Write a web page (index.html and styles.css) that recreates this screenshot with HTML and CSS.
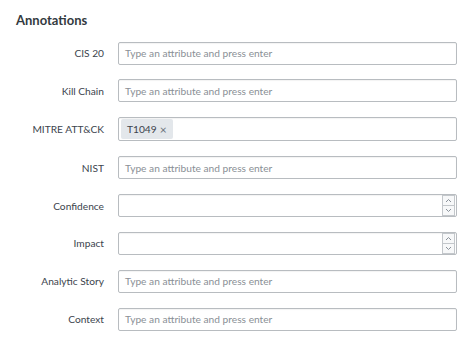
FILE: index.html
```html
<!DOCTYPE html>
<html>
<head>
<meta charset="utf-8">
<link rel="stylesheet" href="styles.css">
</head>
<body>
<div class="panel">
  <h2 class="title">Annotations</h2>
  <div class="form">
    <label class="label">CIS 20</label>
    <div class="field"><span class="ph">Type an attribute and press enter</span></div>

    <label class="label">Kill Chain</label>
    <div class="field"><span class="ph">Type an attribute and press enter</span></div>

    <label class="label">MITRE ATT&amp;CK</label>
    <div class="field chips"><span class="chip">T1049 <span class="x">×</span></span></div>

    <label class="label">NIST</label>
    <div class="field"><span class="ph">Type an attribute and press enter</span></div>

    <label class="label">Confidence</label>
    <div class="field number">
      <span class="spin">
        <span class="btn"><svg width="7" height="5" viewBox="0 0 7 5"><path d="M1 4 L3.5 1.5 L6 4" fill="none" stroke="#8a9199" stroke-width="1"/></svg></span>
        <span class="btn"><svg width="7" height="5" viewBox="0 0 7 5"><path d="M1 1 L3.5 3.5 L6 1" fill="none" stroke="#8a9199" stroke-width="1"/></svg></span>
      </span>
    </div>

    <label class="label">Impact</label>
    <div class="field number">
      <span class="spin">
        <span class="btn"><svg width="7" height="5" viewBox="0 0 7 5"><path d="M1 4 L3.5 1.5 L6 4" fill="none" stroke="#8a9199" stroke-width="1"/></svg></span>
        <span class="btn"><svg width="7" height="5" viewBox="0 0 7 5"><path d="M1 1 L3.5 3.5 L6 1" fill="none" stroke="#8a9199" stroke-width="1"/></svg></span>
      </span>
    </div>

    <label class="label">Analytic Story</label>
    <div class="field"><span class="ph">Type an attribute and press enter</span></div>

    <label class="label">Context</label>
    <div class="field"><span class="ph">Type an attribute and press enter</span></div>
  </div>
</div>
</body>
</html>
```
FILE: styles.css
```css
html, body {
  margin: 0;
  padding: 0;
  background: #ffffff;
}
body {
  font-family: Lato, "Open Sans", "Liberation Sans", sans-serif;
  color: #3c444d;
}
.panel {
  width: 474px;
  height: 352px;
  box-sizing: border-box;
  padding: 11px 17px 0 0;
}
.title {
  margin: 0 0 12.5px 16px;
  font-size: 13px;
  font-weight: 700;
  line-height: 18px;
  color: #333a40;
}
.form {
  display: grid;
  grid-template-columns: 104px 1fr;
  column-gap: 14px;
  row-gap: 14.9px;
  align-items: center;
}
.label {
  text-align: right;
  font-size: 10.2px;
  color: #3c444d;
}
.field {
  height: 23px;
  box-sizing: border-box;
  border: 1px solid #b8bcc0;
  border-radius: 2px;
  background: #fff;
  display: flex;
  align-items: center;
  padding: 0 6px;
  box-shadow: inset 0 1px 1px rgba(0,0,0,0.05);
}
.ph {
  font-size: 10.2px;
  color: #8a9096;
}
.chips {
  height: 24px;
  padding: 0 2px;
}
.chip {
  display: inline-flex;
  align-items: center;
  height: 20px;
  padding: 0 6px 0 6px;
  background: #e3e7eb;
  border-radius: 2px;
  font-size: 10.2px;
  color: #3c444d;
}
.chip .x {
  margin-left: 3px;
  font-size: 12px;
  color: #6b737b;
}
.number {
  justify-content: flex-end;
  padding: 0 1px 0 8px;
}
.spin {
  display: flex;
  flex-direction: column;
  width: 13px;
  height: 21px;
}
.btn {
  flex: 1;
  border: 1px solid #c3c7cb;
  display: flex;
  align-items: center;
  justify-content: center;
  background: #f7f8f9;
}
.btn + .btn {
  border-top: none;
}
```
